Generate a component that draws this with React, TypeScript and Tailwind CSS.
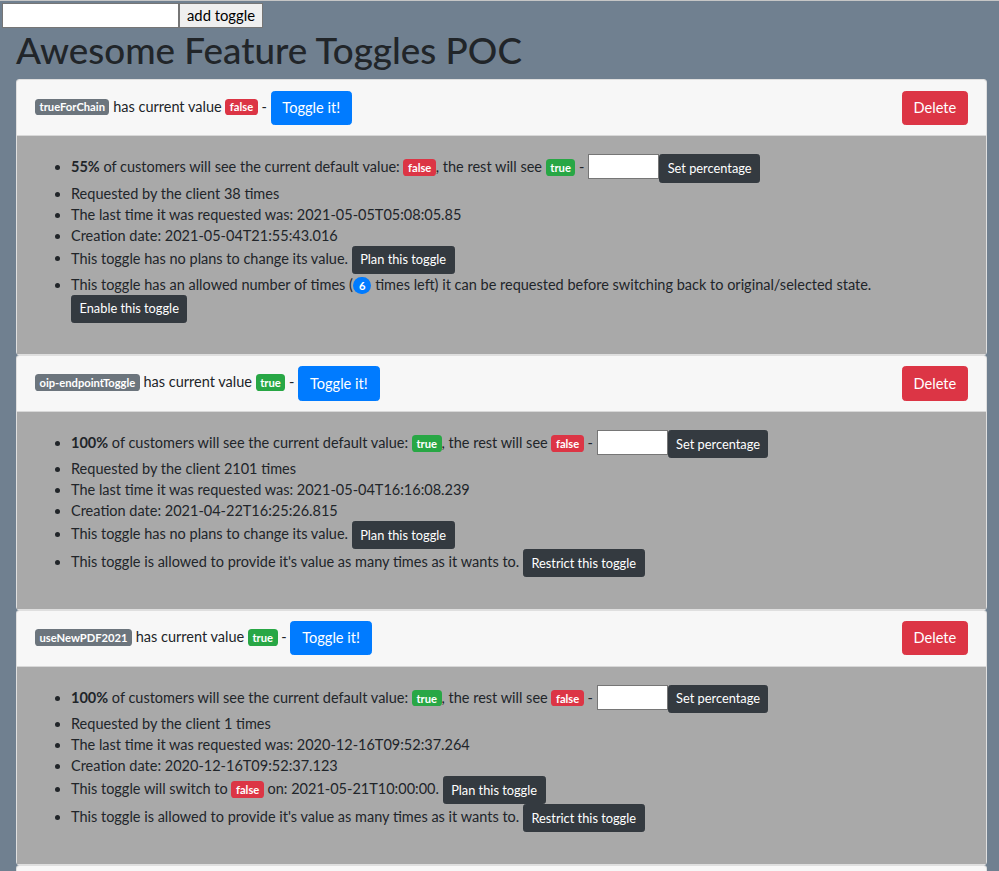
import type { ReactNode } from 'react';

type Toggle = {
  name: string;
  value: boolean;
  percentage: number;
  requested: number;
  lastRequested: string;
  created: string;
  plan: { value: boolean; date: string } | null;
  timesLeft: number | null;
};

const toggles: Toggle[] = [
  {
    name: 'trueForChain',
    value: false,
    percentage: 55,
    requested: 38,
    lastRequested: '2021-05-05T05:08:05.85',
    created: '2021-05-04T21:55:43.016',
    plan: null,
    timesLeft: 6
  },
  {
    name: 'oip-endpointToggle',
    value: true,
    percentage: 100,
    requested: 2101,
    lastRequested: '2021-05-04T16:16:08.239',
    created: '2021-04-22T16:25:26.815',
    plan: null,
    timesLeft: null
  },
  {
    name: 'useNewPDF2021',
    value: true,
    percentage: 100,
    requested: 1,
    lastRequested: '2020-12-16T09:52:37.264',
    created: '2020-12-16T09:52:37.123',
    plan: { value: false, date: '2021-05-21T10:00:00' },
    timesLeft: null
  },
  {
    name: 'newCheckoutFlow',
    value: false,
    percentage: 100,
    requested: 12,
    lastRequested: '2021-05-03T11:20:14.512',
    created: '2021-03-30T08:12:45.004',
    plan: null,
    timesLeft: null
  }
];

function Badge({ color, children }: { color: string; children: ReactNode }) {
  return (
    <span className={`inline-block rounded-[3.6px] px-[4.5px] py-[2.7px] align-baseline text-[11.2px] font-bold leading-none text-white ${color}`}>
      {children}
    </span>
  );
}

function ValueBadge({ value }: { value: boolean }) {
  return value ? <Badge color="bg-[#28a745]">true</Badge> : <Badge color="bg-[#dc3545]">false</Badge>;
}

function SmallButton({ children }: { children: ReactNode }) {
  return (
    <button className="inline-block rounded-[2.7px] border border-[#343a40] bg-[#343a40] px-[7.5px] py-[3.6px] align-middle text-[12.8px] leading-[18.9px] text-white">
      {children}
    </button>
  );
}

function ToggleCard({ toggle }: { toggle: Toggle }) {
  return (
    <div className="rounded-[3.6px] border border-black/[0.125] bg-white">
      <div className="flex items-center justify-between border-b border-black/[0.125] bg-black/[0.03] px-[18px] py-[10.2px]">
        <div className="leading-[21px]">
          <Badge color="bg-[#6c757d]">{toggle.name}</Badge> has current value <ValueBadge value={toggle.value} /> -{' '}
          <button className="inline-block rounded-[3.6px] border border-[#007bff] bg-[#007bff] px-[10.8px] py-[5.4px] align-middle text-[14.6px] leading-[21.6px] text-white">
            Toggle it!
          </button>
        </div>
        <button className="rounded-[3.6px] border border-[#dc3545] bg-[#dc3545] px-[10.8px] py-[5.4px] text-[14.6px] leading-[21.6px] text-white">
          Delete
        </button>
      </div>
      <div className="bg-[#a9a9a9] p-[18px]">
        <ul className="mb-[13.4px] list-disc pl-[36px] leading-[21px]">
          <li>
            <b>{toggle.percentage}%</b> of customers will see the current default value: <ValueBadge value={toggle.value} />, the rest will
            see <ValueBadge value={!toggle.value} /> -{' '}
            <input className="h-[25px] w-[71px] border border-[#767676] bg-white align-baseline" />
            <SmallButton>Set percentage</SmallButton>
          </li>
          <li>Requested by the client {toggle.requested} times</li>
          <li>The last time it was requested was: {toggle.lastRequested}</li>
          <li>Creation date: {toggle.created}</li>
          <li>
            {toggle.plan ? (
              <>
                This toggle will switch to <ValueBadge value={toggle.plan.value} /> on: {toggle.plan.date}.{' '}
              </>
            ) : (
              'This toggle has no plans to change its value. '
            )}
            <SmallButton>Plan this toggle</SmallButton>
          </li>
          <li>
            {toggle.timesLeft !== null ? (
              <>
                This toggle has an allowed number of times (
                <span className="inline-block rounded-full bg-[#007bff] px-[6px] py-[2.7px] text-[11.2px] font-bold leading-none text-white">
                  {toggle.timesLeft}
                </span>{' '}
                times left) it can be requested before switching back to original/selected state.{' '}
                <SmallButton>Enable this toggle</SmallButton>
              </>
            ) : (
              <>
                This toggle is allowed to provide it's value as many times as it wants to. <SmallButton>Restrict this toggle</SmallButton>
              </>
            )}
          </li>
        </ul>
      </div>
    </div>
  );
}

export default function App() {
  return (
    <div className="min-h-screen border-t border-[#c6c6c6] bg-[#708090] font-['Lato',sans-serif] text-[14.5px] leading-[21.6px] text-[#212529]">
      <div className="flex pl-[2px] pt-[2px]">
        <input className="h-[25px] w-[177px] border border-[#767676] bg-white" />
        <button className="h-[25px] border border-[#767676] bg-[#efefef] px-[7px] text-[14.8px] leading-none text-black">add toggle</button>
      </div>
      <div className="ml-[16px] mr-[12px]">
        <h1 className="mb-[7.2px] mt-[1px] text-[36.8px] font-medium leading-[43.2px]">Awesome Feature Toggles POC</h1>
        {toggles.map((toggle) => (
          <ToggleCard key={toggle.name} toggle={toggle} />
        ))}
      </div>
    </div>
  );
}
